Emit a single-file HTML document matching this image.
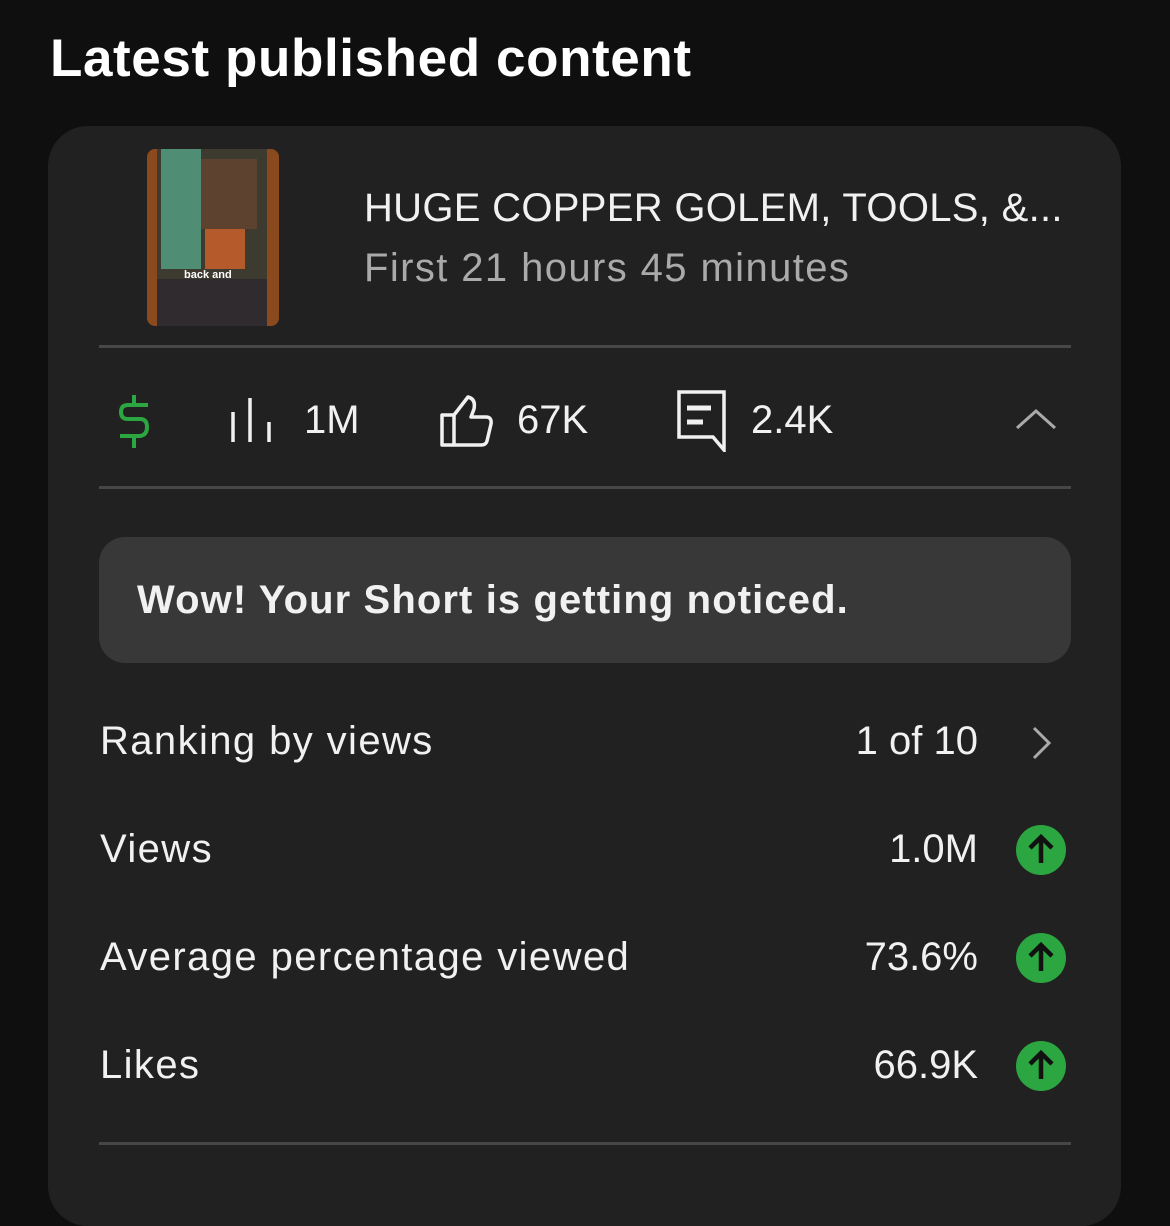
<!DOCTYPE html>
<html><head><meta charset="utf-8"><style>
body{margin:0;width:1170px;height:1170px;background:#0f0f0f;font-family:"Liberation Sans",sans-serif;color:#f1f1f1;overflow:hidden;position:relative}
.abs{position:absolute}
h1{position:absolute;left:50px;top:28px;margin:0;font-size:53px;font-weight:bold;color:#fff;letter-spacing:0.6px}
.card{position:absolute;left:48px;top:126px;width:1073px;height:1100px;background:#212121;border-radius:40px}
.line{position:absolute;left:99px;width:972px;height:3px;background:#474747}
.t{position:absolute;white-space:nowrap}
.row{font-size:40px;color:#f1f1f1}
.lab{letter-spacing:1.4px}
.val{font-size:40px;text-align:right;width:300px}
.up{position:absolute;left:1016px;width:50px;height:50px;border-radius:50%;background:#2ba640}
</style></head><body>
<h1>Latest published content</h1>
<div class="card"></div>
<div class="abs" style="left:147px;top:149px;width:132px;height:177px;border-radius:8px;background:#8a4a1e;overflow:hidden">
 <div class="abs" style="left:10px;top:0;width:110px;height:177px;background:#3d3a30"></div>
 <div class="abs" style="left:14px;top:0;width:40px;height:120px;background:#4f8e74"></div>
 <div class="abs" style="left:54px;top:10px;width:56px;height:70px;background:#5e4230"></div>
 <div class="abs" style="left:58px;top:80px;width:40px;height:40px;background:#b55a2a"></div>
 <div class="abs" style="left:10px;top:130px;width:110px;height:47px;background:#2f2b2e"></div>
 <div class="t" style="left:37px;top:120px;font-size:11px;font-weight:bold;color:#fff">back and</div>
</div>
<div class="t" style="left:364px;top:186px;font-size:40px;color:#f1f1f1;letter-spacing:0.3px">HUGE COPPER GOLEM, TOOLS, &amp;...</div>
<div class="t" style="left:364px;top:246px;font-size:40px;color:#aaa;letter-spacing:1.4px">First 21 hours 45 minutes</div>
<div class="line" style="top:345px"></div>
<svg class="abs" style="left:112px;top:392px" width="44" height="60" viewBox="0 0 44 60" fill="none" stroke="#2ba640" stroke-width="4"><path d="M36 13H16q-7 0-7 7t7 7h12q7 0 7 8t-7 9H8M22 3v10M22 44v12"/></svg>
<svg class="abs" style="left:226px;top:396px" width="50" height="46" viewBox="0 0 50 46" stroke="#f1f1f1" stroke-width="3.5"><path d="M7 16v30M24 2v44M43 26v20"/></svg>
<div class="t row" style="left:304px;top:398px">1M</div>
<svg class="abs" style="left:440px;top:393px" width="56" height="54" viewBox="0 0 56 54" fill="none" stroke="#f1f1f1" stroke-width="3.5" stroke-linejoin="round"><path d="M2 22h12v30H2zM14 22L28 4q8 2 6 12l-3 8h15q6 0 5 7l-4 17q-1 4-6 4H14"/></svg>
<div class="t row" style="left:517px;top:398px">67K</div>
<svg class="abs" style="left:677px;top:390px" width="50" height="62" viewBox="0 0 50 62" fill="none" stroke="#f1f1f1" stroke-width="3.5"><path d="M2 2h45v58L36 47H2z"/><path d="M10 18h24M10 32h16" stroke-width="5"/></svg>
<div class="t row" style="left:751px;top:398px">2.4K</div>
<svg class="abs" style="left:1015px;top:408px" width="42" height="22" viewBox="0 0 42 22" fill="none" stroke="#aaa" stroke-width="3"><path d="M2 20L21 3l19 17"/></svg>
<div class="line" style="top:486px"></div>
<div class="abs" style="left:99px;top:537px;width:972px;height:126px;border-radius:26px;background:#383838"></div>
<div class="t" style="left:137px;top:578px;font-size:40px;font-weight:bold;color:#f1f1f1;letter-spacing:1.1px">Wow! Your Short is getting noticed.</div>
<div class="t row lab" style="left:100px;top:719px">Ranking by views</div>
<div class="t val" style="left:678px;top:719px">1 of 10</div>
<svg class="abs" style="left:1031px;top:725px" width="22" height="36" viewBox="0 0 22 36" fill="none" stroke="#aaa" stroke-width="3"><path d="M3 3l15 15L3 33"/></svg>
<div class="t row lab" style="left:100px;top:827px">Views</div>
<div class="t val" style="left:678px;top:827px">1.0M</div>
<div class="t row lab" style="left:100px;top:935px">Average percentage viewed</div>
<div class="t val" style="left:678px;top:935px">73.6%</div>
<div class="t row lab" style="left:100px;top:1043px">Likes</div>
<div class="t val" style="left:678px;top:1043px">66.9K</div>
<svg width="0" height="0" style="position:absolute"><defs><g id="a"><path d="M25 38V13M14 23l11-11 11 11" fill="none" stroke="#111" stroke-width="4.5"/></g></defs></svg>
<svg class="up" style="top:825px" viewBox="0 0 50 50"><use href="#a"/></svg>
<svg class="up" style="top:933px" viewBox="0 0 50 50"><use href="#a"/></svg>
<svg class="up" style="top:1041px" viewBox="0 0 50 50"><use href="#a"/></svg>
<div class="line" style="top:1142px"></div>
</body></html>
